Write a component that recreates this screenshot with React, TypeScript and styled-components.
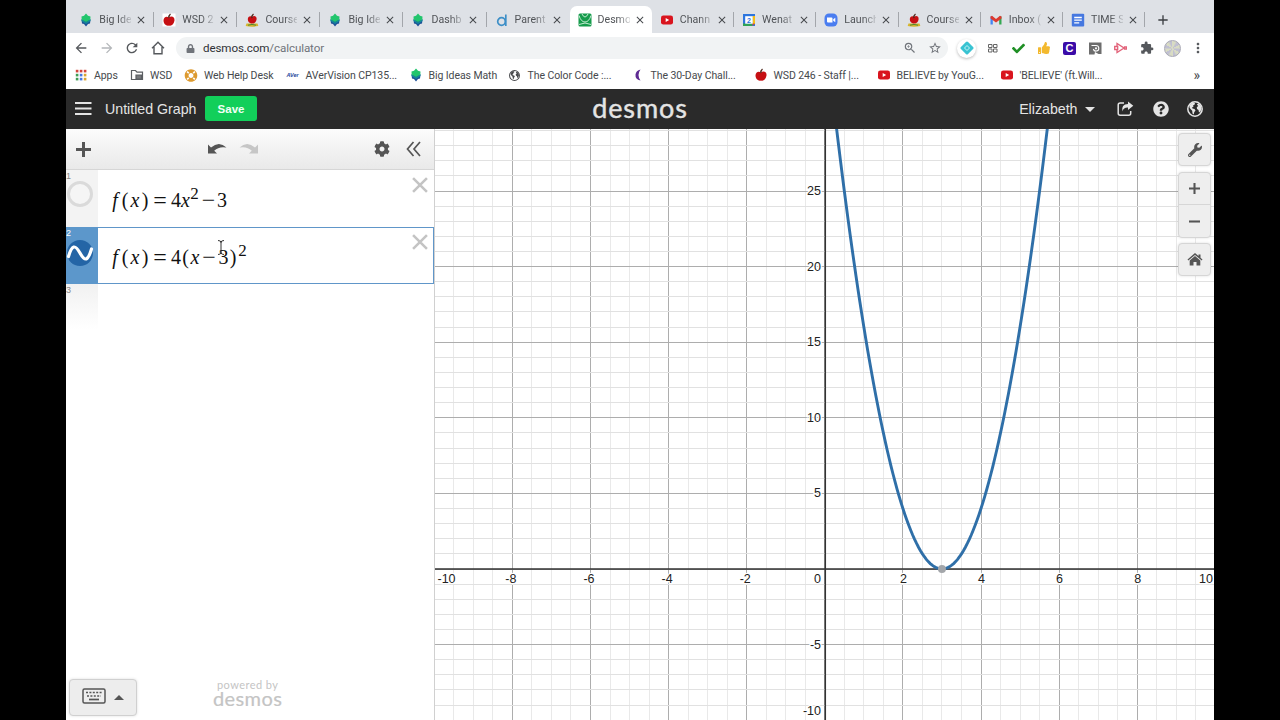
import React from "react";
import styled, { createGlobalStyle } from "styled-components";
import { FaWrench, FaQuestionCircle, FaCog, FaCheck, FaThumbsUp, FaLifeRing, FaLock } from "react-icons/fa";
import { MdArrowBack, MdArrowForward, MdRefresh, MdZoomIn, MdStarBorder, MdMoreVert, MdAdd, MdClose, MdExtension } from "react-icons/md";

const Global = createGlobalStyle`
  html, body { margin: 0; background: #000; }
  body { width: 1280px; height: 720px; overflow: hidden; font-family: "Liberation Sans", Arial, sans-serif; }
  * { box-sizing: border-box; }
  svg { display: block; flex: none; }
`;

const Screen = styled.main`
  width: 1148px;
  height: 720px;
  margin-left: 66px;
  display: flex;
  flex-direction: column;
  background: #fff;
  overflow: hidden;
`;

/* ---------- browser chrome ---------- */
const TabStrip = styled.div`
  height: 33px;
  padding: 6px 0 0 5.3px;
  display: flex;
  background: #dee1e6;
  font: 10.6px Roboto, sans-serif;
  color: #505357;
`;
const Tab = styled.div<{ $active?: boolean; $divided?: boolean; $w: number }>`
  position: relative;
  width: ${(p) => p.$w}px;
  height: 27px;
  flex: none;
  display: flex;
  align-items: center;
  padding-left: 7px;
  border-radius: 7px 7px 0 0;
  background: ${(p) => (p.$active ? "#fff" : "transparent")};
  &::after {
    content: "";
    position: absolute;
    right: 0;
    top: 6px;
    width: 1px;
    height: 15px;
    background: ${(p) => (p.$divided ? "#a3a6ab" : "transparent")};
  }
`;
const TabTitle = styled.span`
  width: 32px;
  margin-left: 5px;
  white-space: nowrap;
  mask-image: linear-gradient(90deg, #000 60%, #0003);
`;
const TabClose = styled(MdClose)`
  margin-left: 4px;
  color: #46494d;
`;
const NewTab = styled(MdAdd)`
  margin: 6px 0 0 10px;
  color: #3b3e42;
`;
const AddressRow = styled.div`
  height: 30px;
  display: flex;
  align-items: center;
  color: #55585c;
`;
const NavButtons = styled.div`
  width: 110px;
  padding-left: 7px;
  display: flex;
  gap: 9.700px;
`;
const Omnibox = styled.div`
  width: 772px;
  height: 22px;
  padding: 0 6px 0 10px;
  display: flex;
  align-items: center;
  border-radius: 11px;
  background: #f1f3f4;
  font: 11.6px Roboto, sans-serif;
  color: #70747a;
  b { font-weight: 400; color: #303236; }
`;
const Url = styled.span`
  flex: 1;
  margin-left: 8px;
  letter-spacing: -0.1px;
`;
const OmniIcons = styled.div`
  display: flex;
  gap: 11px;
`;
const Extensions = styled.div`
  display: flex;
  align-items: center;
  margin-left: 6px;
`;
const ExtensionSlot = styled.div`
  width: 25.7px;
  display: flex;
  justify-content: center;
`;
const TealBadge = styled.div`
  width: 19px;
  height: 19px;
  display: grid;
  place-items: center;
  border-radius: 50%;
  background: #fff;
  box-shadow: 0 1px 3px #0004;
`;
const LetterBadge = styled.div`
  width: 13px;
  height: 13px;
  border-radius: 2px;
  background: #3b0ca8;
  color: #fff;
  font: bold 11px/13px "Liberation Sans", sans-serif;
  text-align: center;
`;
const Avatar = styled.div`
  width: 17px;
  height: 17px;
  border-radius: 50%;
  border: 1px solid #a9a9b6;
  background: repeating-conic-gradient(#d9dcc4 0 20deg, #c0c0d2 40deg 60deg);
`;
const Bookmarks = styled.div`
  height: 26px;
  padding: 0 14px 2px 7px;
  display: flex;
  align-items: center;
  font: 10.5px Roboto, sans-serif;
  letter-spacing: -0.08px;
  color: #46494d;
`;
const Bookmark = styled.div<{ $w: number }>`
  width: ${(p) => p.$w}px;
  display: flex;
  align-items: center;
  gap: 5px;
  white-space: nowrap;
`;
const Overflow = styled.span`
  margin-left: auto;
  font-size: 14px;
`;
const AverMark = styled.span`
  width: 16px;
  text-align: center;
  font: italic bold 5.5px "Liberation Sans", sans-serif;
  color: #28479b;
`;

/* ---------- calculator header ---------- */
const AppHeader = styled.header`
  height: 40px;
  flex: none;
  display: grid;
  grid-template-columns: 1fr auto 1fr;
  align-items: center;
  padding-bottom: 1px;
  background: #2a2a2a;
  color: #e4e4e4;
`;
const HeaderLeft = styled.div`
  display: flex;
  align-items: center;
  padding-left: 9px;
`;
const GraphTitle = styled.span`
  width: 100px;
  margin-left: 13px;
  font-size: 14.2px;
  white-space: nowrap;
`;
const SaveButton = styled.button`
  width: 52px;
  height: 25px;
  padding: 0;
  border: 0;
  border-radius: 3px;
  background: #12cf5a;
  color: #f2fff6;
  font: bold 11.5px "Liberation Sans", sans-serif;
`;
const Wordmark = styled.span<{ $size: number; $ls: number; $weight: number }>`
  font: 400 ${(p) => p.$size}px/1 Lato, sans-serif;
  letter-spacing: ${(p) => p.$ls}px;
  -webkit-text-stroke: ${(p) => p.$weight}px currentColor;
`;
const HeaderWordmark = styled(Wordmark)`
  padding-bottom: 2px;
`;
const HeaderRight = styled.div`
  display: flex;
  justify-content: flex-end;
  align-items: center;
  padding-right: 11px;
`;
const UserName = styled.span`
  font-size: 14.2px;
`;
const Caret = styled.i<{ $up?: boolean; $color: string }>`
  border: 5px solid transparent;
  border-${(p) => (p.$up ? "bottom" : "top")}: 5px solid ${(p) => p.$color};
  border-${(p) => (p.$up ? "top" : "bottom")}: 0;
`;
const MenuCaret = styled(Caret)`
  margin: 2px 0 0 7px;
`;
const HeaderIcons = styled.div`
  display: flex;
  align-items: center;
  gap: 18.500px;
  margin-left: 22.500px;
`;

/* ---------- expression list ---------- */
const Workspace = styled.div`
  flex: 1;
  display: flex;
  min-height: 0;
`;
const ExpressionPanel = styled.section`
  width: 369px;
  display: flex;
  flex-direction: column;
  background: #fff;
  border-right: 1px solid #d0d0d0;
`;
const PanelToolbar = styled.div`
  height: 41px;
  flex: none;
  display: flex;
  align-items: center;
  padding: 0 13px 0 10px;
  background: linear-gradient(#fcfcfc, #e9e9e9);
  border-bottom: 1px solid #d6d6d6;
  color: #555;
`;
const UndoGroup = styled.div`
  display: flex;
  gap: 12px;
  margin: 0 auto 0 116px;
`;
const SettingsGroup = styled.div`
  display: flex;
  align-items: center;
  gap: 16px;
`;
const Row = styled.div<{ $active?: boolean }>`
  height: 57px;
  flex: none;
  display: flex;
  background: #fff;
  box-shadow: ${(p) => (p.$active ? "inset 0 0 0 1px #6096c9" : "none")};
`;
const Gutter = styled.div<{ $tone: "idle" | "active" | "next" }>`
  width: 32px;
  flex: none;
  display: flex;
  flex-direction: column;
  font-size: 9px;
  line-height: 11px;
  padding-top: 1px;
  color: ${(p) => (p.$tone === "active" ? "#fff" : "#888")};
  background: ${(p) =>
    p.$tone === "active" ? "#5c97cb" : p.$tone === "idle" ? "#f3f3f3" : "linear-gradient(#f1f1f1, #fff 80%)"};
`;
const HiddenCurve = styled.div`
  width: 26px;
  height: 26px;
  margin: -1px 0 0 1px;
  border: 3px solid #dadada;
  border-radius: 50%;
  background: #f5f5f5;
`;
const Formula = styled.div`
  flex: 1;
  display: flex;
  align-items: baseline;
  padding: 17px 0 0 11px;
  font: 20px/24px "Liberation Serif", serif;
  color: #111;
`;
const Glyph = styled.span<{ $w: number; $italic?: boolean; $sup?: boolean }>`
  width: ${(p) => p.$w}px;
  flex: none;
  position: relative;
  top: ${(p) => (p.$sup ? -8 : 0)}px;
  font-style: ${(p) => (p.$italic ? "italic" : "normal")};
  font-size: ${(p) => (p.$sup ? 17 : 20)}px;
  text-align: center;
`;
const Operator = styled(Glyph)`
  font-size: 24px;
  margin: 0 -1px;
  top: 1px;
  display: flex;
  justify-content: center;
`;
const RemoveIcon = styled.div`
  padding: 7px 6px 0 0;
`;
const TextCursor = styled.svg`
  position: absolute;
  left: -1px;
  top: -5px;
`;
const PanelFooter = styled.div`
  margin-top: auto;
  display: flex;
  align-items: center;
  padding: 0 0 4px 3px;
`;
const KeypadButton = styled.button`
  width: 68px;
  height: 37px;
  padding: 0 1px 4px 0;
  display: flex;
  justify-content: center;
  align-items: center;
  gap: 8px;
  border: 1px solid #d0d0d0;
  border-radius: 4px;
  background: #ededed;
  box-shadow: 0 0 3px #0002;
`;
const KeypadCaret = styled(Caret)`
  margin-top: 4px;
`;
const PoweredBy = styled.div`
  margin: -9px 0 0 76px;
  display: flex;
  flex-direction: column;
  align-items: center;
  color: #c4c4c4;
  font: 11px/13px Lato, sans-serif;
  letter-spacing: 0.45px;
`;
const FooterWordmark = styled(Wordmark)`
  margin-top: -3px;
`;

/* ---------- graph ---------- */
const GraphPane = styled.section`
  position: relative;
  width: 779px;
  height: 591px;
`;
const GraphControls = styled.div`
  position: absolute;
  top: 4px;
  right: 3px;
  display: flex;
  flex-direction: column;
  gap: 5.500px;
`;
const ControlGroup = styled.div`
  width: 33px;
  border: 1px solid #d6d6d6;
  border-radius: 4px;
  background: #eee;
  box-shadow: 0 0 3px #0002;
  color: #555;
`;
const Control = styled.div`
  height: 31px;
  display: grid;
  place-items: center;
  & + & { height: 33px; padding-top: 1px; border-top: 1px solid #d6d6d6; }
`;

const BigIdeas = () => (
  <svg width="16" height="16" viewBox="0 0 16 16">
    <path d="M8 8 12.500 7.500 12 11.500 10 12 8 14.500 6 12 4 11.500 3.500 7.500Z" fill="#1c4f96" />
    <path d="M3.500 7 8 10.500 12.500 7V9L8 12 3.500 9Z" fill="#158a9c" />
    <path d="M8 1.500 10 3.800 12.500 4.500 12.300 7.500 8 10 3.700 7.500 3.500 4.500 6 3.800Z" fill="#22c56d" />
  </svg>
);
const Apple = ({ box, base }: { box?: boolean; base?: boolean }) => (
  <svg width="16" height="16" viewBox="0 0 16 16">
    {box && <rect x="1.500" y="1.500" width="13" height="13" fill="#fff" />}
    {base && <path d="M2.500 11.500h11l.8 2.500q-6.300 1.300-12.600 0Z" fill="#d6b52b" />}
    {base && <path d="M4 13.200q4-1.500 8 0" stroke="#4c8a35" fill="none" />}
    <path
      transform={base ? "translate(1.800 .5) scale(.8)" : undefined}
      d="M8 5.500C10 3.500 14 4.500 13.500 8.500 13 12 10.500 14.500 8 13.500 5.500 14.500 2.500 12 2.500 8.500 2.500 4.500 6 3.800 8 5.500Z"
      fill="#c60f13"
    />
    <path d="M8 6Q7.500 3.500 9.500 2" stroke="#4d2418" strokeWidth="1.300" fill="none" />
  </svg>
);
const YouTube = () => (
  <svg width="16" height="16" viewBox="0 0 16 16">
    <rect x="2" y="3.500" width="12" height="9" rx="2.300" fill="#d9141e" />
    <path d="M6.700 6v4l3.500-2Z" fill="#fff" />
  </svg>
);
const ParentD = () => (
  <svg width="16" height="16" viewBox="0 0 16 16" fill="none" stroke="#3d8fc7" strokeWidth="1.700">
    <circle cx="7.500" cy="9.500" r="3.800" />
    <path d="M11.800 2.500V14" />
  </svg>
);
const DesmosTab = () => (
  <svg width="16" height="16" viewBox="0 0 16 16">
    <rect x="1.500" y="1.500" width="13" height="13" rx="1.500" fill="#169c4c" />
    <path d="M2 3.500Q4 10 8 10T14 3.500M2 12.500q6-3 12 0M5 2q3 6 6 0" fill="none" stroke="#c5ebd2" strokeWidth="1" />
  </svg>
);
const CalendarIcon = () => (
  <svg width="16" height="16" viewBox="0 0 16 16">
    <path d="M2 2h12v12H2Z" fill="#2d75de" />
    <path d="M11.500 4H14v8h-2.500Z" fill="#f5bd19" />
    <path d="M2 11.500h9.500V14H2Z" fill="#2fa356" />
    <path d="M11.500 11.500H14L11.500 14Z" fill="#dc4437" />
    <path d="M4.200 4.200h7.500v7.500H4.200Z" fill="#fff" />
    <text x="8" y="10.600" fontSize="7" textAnchor="middle" fontFamily="Liberation Sans" fontWeight="700" fill="#2d75de">2</text>
  </svg>
);
const ZoomIcon = () => (
  <svg width="16" height="16" viewBox="0 0 16 16">
    <rect x="1.500" y="1.500" width="13" height="13" rx="4.500" fill="#4a7df0" />
    <path d="M4 5.500h4.500q1 0 1 1v4H5q-1 0-1-1ZM10.200 7.200 12.300 5.700v4.600L10.200 8.800Z" fill="#fff" />
  </svg>
);
const Gmail = () => (
  <svg width="16" height="16" viewBox="0 0 16 16">
    <path d="M2.500 12.500V4.500h2.300v8Z" fill="#4285f4" />
    <path d="M11.200 12.500v-8h2.300v8Z" fill="#34a853" />
    <path d="M2.500 4.500 4 3.700 8 7l4-3.300 1.500.8v2L8 10.500 2.500 6.500Z" fill="#dc3a30" />
  </svg>
);
const Docs = () => (
  <svg width="16" height="16" viewBox="0 0 16 16">
    <rect x="1.800" y="1.800" width="12.400" height="12.600" rx="1" fill="#4678e0" />
    <path d="M4.200 5.500h7.600M4.200 8.200h7.600M4.200 10.900h5" stroke="#fff" strokeWidth="1.300" />
  </svg>
);
const AppsGrid = () => {
  const tones = ["#d2453b", "#d2453b", "#d2453b", "#3f9d55", "#4678e0", "#d9a630", "#3f9d55", "#4678e0", "#d9a630"];
  return (
    <svg width="16" height="16" viewBox="0 0 16 16">
      {tones.map((c, i) => (
        <rect key={i} x={2.8 + (i % 3) * 4} y={2.8 + Math.floor(i / 3) * 4} width="2.600" height="2.600" fill={c} />
      ))}
    </svg>
  );
};
const Folder = () => (
  <svg width="16" height="16" viewBox="0 0 16 16" fill="none" stroke="#5b5e62" strokeWidth="1.200">
    <path d="M2.500 12.500V3.500h4l1.500 1.700h5.500v7.300Z" />
    <path d="M7 12V8h5.500v4Z" fill="#77797c" />
  </svg>
);
const House = () => (
  <svg width="16" height="16" viewBox="0 0 16 16" fill="none" stroke="#55585c" strokeWidth="1.400">
    <path d="M2 8.300 8 2.300l6 6M4 7v6.700h8V7" />
  </svg>
);
const ThumbUp = styled(FaThumbsUp)`
  color: #f3b92e;
`;
const Globe = ({ size, color }: { size: number; color: string }) => (
  <svg width={size} height={size} viewBox="0 0 16 16">
    <circle cx="8" cy="8" r="7.200" fill="none" stroke={color} strokeWidth="1.500" />
    <path
      d="M2.500 4 5.500 1.500 8 2 7.500 3.800 6 4.500 6.500 5.800 5 6.500 5.500 7.500 7.500 8 8.500 9.500 7.200 11.200 6.800 13.500 5.500 12.500 5.200 9.800 3.500 8 2.500 6.500ZM9.800 3.200 11.500 2.500 13.800 4.500 14.500 7.500 13.500 10.500 12 11.500 11.500 9 10 8 9.800 6.200 11.200 5Z"
      fill={color}
    />
  </svg>
);
const WebGlobe = styled.div`
  width: 16px;
  display: grid;
  place-items: center;
`;
const Crescent = () => (
  <svg width="16" height="16" viewBox="0 0 16 16">
    <path d="M10.500 2.500Q6.500 8 10.500 13.500 5 12.500 5.500 7.500 6 3.500 10.500 2.500Z" fill="#5e2b93" />
  </svg>
);
const UndoArrow = ({ flip, color }: { flip?: boolean; color: string }) => (
  <svg width="20" height="14" viewBox="0 0 20 14">
    <g transform={flip ? "translate(20 0) scale(-1 1)" : undefined} fill={color}>
      <path d="M1 2.500V11.500H10L7.200 8.800Q12 4 19.500 5.500 12-1.500 4 5.500Z" />
    </g>
  </svg>
);
const HomeSolid = () => (
  <svg width="16" height="14" viewBox="0 0 16 14" fill="#555">
    <path d="M8 0 11.500 3V1.500h2V4.700L15.500 6.500l-.8 1L8 1.900 1.300 7.500l-.8-1Z" />
    <path d="M8 3 13.300 7.500V12.500H9.500V9h-3v3.500H2.700v-5Z" />
  </svg>
);
const ShareIcon = () => (
  <svg width="17" height="16" viewBox="0 0 17 16">
    <path d="M7 2H3.200Q1.200 2 1.200 4v8.200q0 2 2 2h8.500q2 0 2-2V10" fill="none" stroke="#e4e4e4" strokeWidth="1.500" />
    <path d="M11 .5 16.300 4.800 11 9V6.600Q6.500 6.400 5.300 10.500 4 3.300 11 2.900Z" fill="#e4e4e4" />
  </svg>
);
const Cross = () => (
  <svg width="16" height="16" viewBox="0 0 15 15" stroke="#c4c4c4" strokeWidth="2.400">
    <path d="M1 1 14 14M14 1 1 14" />
  </svg>
);
const Plus = ({ size, weight, minus }: { size: number; weight: number; minus?: boolean }) => (
  <svg width={size} height={size} viewBox="0 0 16 16" stroke="#555" strokeWidth={weight}>
    <path d={minus ? "M0 8H16" : "M0 8H16M8 0V16"} />
  </svg>
);

const tabs: { title: string; icon: React.ReactNode; active?: boolean; divided?: boolean }[] = [
  { title: "Big Ide", icon: <BigIdeas />, divided: true },
  { title: "WSD 2", icon: <Apple box />, divided: true },
  { title: "Course", icon: <Apple base />, divided: true },
  { title: "Big Ide", icon: <BigIdeas />, divided: true },
  { title: "Dashb", icon: <BigIdeas />, divided: true },
  { title: "Parent", icon: <ParentD /> },
  { title: "Desmo", icon: <DesmosTab />, active: true },
  { title: "Chann", icon: <YouTube />, divided: true },
  { title: "Wenat", icon: <CalendarIcon />, divided: true },
  { title: "Launch", icon: <ZoomIcon />, divided: true },
  { title: "Course", icon: <Apple base />, divided: true },
  { title: "Inbox (", icon: <Gmail />, divided: true },
  { title: "TIME S", icon: <Docs />, divided: true },
];

const bookmarks: { label: string; icon: React.ReactNode; w: number }[] = [
  { label: "Apps", icon: <AppsGrid />, w: 56 },
  { label: "WSD", icon: <Folder />, w: 54 },
  { label: "Web Help Desk", icon: <FaLifeRing size={13} color="#dd9a2f" style={{ width: 16 }} />, w: 101.5 },
  { label: "AVerVision CP135...", icon: <AverMark>AVer</AverMark>, w: 123 },
  { label: "Big Ideas Math", icon: <BigIdeas />, w: 99 },
  { label: "The Color Code :...", icon: <WebGlobe><Globe size={11} color="#48494c" /></WebGlobe>, w: 123 },
  { label: "The 30-Day Chall...", icon: <Crescent />, w: 123 },
  { label: "WSD 246 - Staff |...", icon: <Apple />, w: 123 },
  { label: "BELIEVE by YouG...", icon: <YouTube />, w: 123 },
  { label: "'BELIEVE' (ft.Will...", icon: <YouTube />, w: 110 },
];

/* Graph scale: pixels per unit on each axis and the position of the origin. */
const OX = 389.8;
const OY = 440;
const SX = 39.05;
const SY = 15.12;
const px = (x: number) => OX + x * SX;
const py = (y: number) => OY - y * SY;
const range = (a: number, b: number, step: number) =>
  Array.from({ length: Math.round((b - a) / step) + 1 }, (_, i) => a + i * step);
const snap = (v: number) => Math.round(v - 0.5) + 0.5;

const curve = range(0, 6, 0.05)
  .map((x, i) => `${i ? "L" : "M"}${px(x).toFixed(2)} ${py(4 * (x - 3) ** 2).toFixed(2)}`)
  .join("");

const Plot = () => (
  <svg width="779" height="591" viewBox="0 0 779 591">
    <rect width="779" height="591" fill="#fff" />
    {range(-10, 10, 0.5).map((x) => (
      <path key={x} d={`M${snap(px(x))} 0V591`} stroke={x % 2 === 0 ? "#adadad" : "#e9e9e9"} />
    ))}
    {range(-10, 30, 1).map((y) => (
      <path key={y} d={`M0 ${snap(py(y))}H779`} stroke={y % 5 === 0 ? "#adadad" : "#e1e1e1"} />
    ))}
    <path d={`M${OX + 0.5} 0V591M0 ${OY}H779`} stroke="#333" strokeWidth="1.500" />
    <path d={curve} fill="none" stroke="#2f6fa8" strokeWidth="2.900" />
    <circle cx={px(3)} cy={OY} r="4" fill="#a3a6aa" />
    <g
      fontFamily="Liberation Sans, Arial, sans-serif"
      fontSize="12.500"
      fill="#222"
      stroke="#fff"
      strokeWidth="2.500"
      paintOrder="stroke"
    >
      {[-8, -6, -4, -2, 2, 4, 6, 8].map((x) => (
        <text key={x} x={px(x) - (x < 0 ? 1.5 : -0.5)} y="454" textAnchor="middle">{x}</text>
      ))}
      <text x="2.500" y="454">-10</text>
      <text x="778" y="454" textAnchor="end">10</text>
      <text x="386" y="454" textAnchor="end">0</text>
      {[25, 20, 15, 10, 5, -5].map((y) => (
        <text key={y} x="386" y={py(y) + 4} textAnchor="end">{y}</text>
      ))}
      <text x="386" y="586" textAnchor="end">-10</text>
    </g>
  </svg>
);

const FunctionHead = () => (
  <>
    <Glyph $w={12} $italic>f</Glyph>
    <Glyph $w={8}>(</Glyph>
    <Glyph $w={12} $italic>x</Glyph>
    <Glyph $w={8}>)</Glyph>
    <Operator $w={24}>=</Operator>
  </>
);

export default function App() {
  return (
    <>
      <Global />
      <Screen>
        <TabStrip>
          {tabs.map((t, i) => (
            <Tab key={i} $active={t.active} $divided={t.divided} $w={i < 6 ? 83.05 : 82.25}>
              {t.icon}
              <TabTitle>{t.title}</TabTitle>
              <TabClose size={12} />
            </Tab>
          ))}
          <NewTab size={16} />
        </TabStrip>
        <AddressRow>
          <NavButtons>
            <MdArrowBack size={16} />
            <MdArrowForward size={16} color="#b4b7ba" />
            <MdRefresh size={16} />
            <House />
          </NavButtons>
          <Omnibox>
            <FaLock size={9} />
            <Url><b>desmos.com</b>/calculator</Url>
            <OmniIcons>
              <MdZoomIn size={14} />
              <MdStarBorder size={14} />
            </OmniIcons>
          </Omnibox>
          <Extensions>
            <ExtensionSlot>
              <TealBadge>
                <svg width="14" height="14" viewBox="0 0 14 14">
                  <path d="M7 2 12 7 7 12 2 7Z" fill="#39c3d2" stroke="#39c3d2" strokeWidth="3" strokeLinejoin="round" />
                  <path d="M7 4.500 9.500 7 7 9.500 4.500 7Z" fill="none" stroke="#c9f5f7" />
                </svg>
              </TealBadge>
            </ExtensionSlot>
            <ExtensionSlot>
              <svg width="10" height="10" viewBox="0 0 10 10" fill="none" stroke="#666">
                <path d="M.5 1.500h3.500v3H.5ZM5.500 1.500H9v3H5.500ZM.5 6h3.500v3H.5ZM5.500 6H9v3H5.500Z" />
              </svg>
            </ExtensionSlot>
            <ExtensionSlot><FaCheck size={13} color="#1f8f25" /></ExtensionSlot>
            <ExtensionSlot><ThumbUp size={12} /></ExtensionSlot>
            <ExtensionSlot><LetterBadge>C</LetterBadge></ExtensionSlot>
            <ExtensionSlot>
              <svg width="13" height="13" viewBox="0 0 13 13">
                <path d="M0 .5H12.500V12H9.500L6 10 5.500 12.500H0Z" fill="#6d6d6d" />
                <path d="M2.500 3.500h4.500a2.800 2.800 0 1 1-2.700 3.500" fill="none" stroke="#fff" strokeWidth="1.100" />
                <circle cx="7" cy="6.300" r="1.100" fill="#fff" />
              </svg>
            </ExtensionSlot>
            <ExtensionSlot>
              <svg width="13" height="12" viewBox="0 0 13 12" fill="none" stroke="#e2637a" strokeWidth="1.300">
                <path d="M3 4V1.500L10 6 3 10.500V8" />
                <path d="M.7 4.500h3v3h-3ZM10.500 5h2v2h-2Z" />
              </svg>
            </ExtensionSlot>
            <ExtensionSlot><MdExtension size={14} /></ExtensionSlot>
            <ExtensionSlot><Avatar /></ExtensionSlot>
            <ExtensionSlot><MdMoreVert size={16} /></ExtensionSlot>
          </Extensions>
        </AddressRow>
        <Bookmarks>
          {bookmarks.map((b) => (
            <Bookmark key={b.label} $w={b.w}>
              {b.icon}
              {b.label}
            </Bookmark>
          ))}
          <Overflow>»</Overflow>
        </Bookmarks>

        <AppHeader>
          <HeaderLeft>
            <svg width="17" height="15" viewBox="0 0 17 15" stroke="#e4e4e4" strokeWidth="2">
              <path d="M0 2H16.500M0 7.500H16.500M0 13H16.500" />
            </svg>
            <GraphTitle>Untitled Graph</GraphTitle>
            <SaveButton>Save</SaveButton>
          </HeaderLeft>
          <HeaderWordmark $size={27} $ls={0.9} $weight={0.4}>desmos</HeaderWordmark>
          <HeaderRight>
            <UserName>Elizabeth</UserName>
            <MenuCaret $color="#e4e4e4" />
            <HeaderIcons>
              <ShareIcon />
              <FaQuestionCircle size={16} />
              <Globe size={16} color="#e4e4e4" />
            </HeaderIcons>
          </HeaderRight>
        </AppHeader>

        <Workspace>
          <ExpressionPanel>
            <PanelToolbar>
              <Plus size={15} weight={3.2} />
              <UndoGroup>
                <UndoArrow color="#555" />
                <UndoArrow flip color="#c6c6c6" />
              </UndoGroup>
              <SettingsGroup>
                <FaCog size={16} />
                <svg width="15" height="16" viewBox="0 0 15 16" fill="none" stroke="#555" strokeWidth="1.700">
                  <path d="M7.500 1 1.500 8l6 7M14 1 8 8l6 7" />
                </svg>
              </SettingsGroup>
            </PanelToolbar>
            <Row>
              <Gutter $tone="idle">
                1
                <HiddenCurve />
              </Gutter>
              <Formula>
                <FunctionHead />
                <Glyph $w={10}>4</Glyph>
                <Glyph $w={8} $italic>x</Glyph>
                <Glyph $w={11} $sup>2</Glyph>
                <Operator $w={19}>−</Operator>
                <Glyph $w={10}>3</Glyph>
              </Formula>
              <RemoveIcon><Cross /></RemoveIcon>
            </Row>
            <Row $active>
              <Gutter $tone="active">
                2
                <svg width="28" height="28" viewBox="0 0 28 28">
                  <circle cx="14" cy="14" r="13" fill="#2465a6" />
                  <path d="M2.500 17.500C6 6 9 5 14 14S22 22 25.500 10" fill="none" stroke="#fff" strokeWidth="3.200" strokeLinecap="round" />
                </svg>
              </Gutter>
              <Formula>
                <FunctionHead />
                <Glyph $w={10}>4</Glyph>
                <Glyph $w={9}>(</Glyph>
                <Glyph $w={10} $italic>x</Glyph>
                <Operator $w={20}>−</Operator>
                <Glyph $w={11}>
                  3
                  <TextCursor width="8" height="16" viewBox="0 0 8 16" fill="none" stroke="#333">
                    <path d="M1 .5Q4 .5 4 2.500 4 .5 7 .5M4 2V13M1 14.500Q4 14.500 4 12.500 4 14.500 7 14.500" />
                  </TextCursor>
                </Glyph>
                <Glyph $w={8}>)</Glyph>
                <Glyph $w={11} $sup>2</Glyph>
              </Formula>
              <RemoveIcon><Cross /></RemoveIcon>
            </Row>
            <Row>
              <Gutter $tone="next">3</Gutter>
            </Row>
            <PanelFooter>
              <KeypadButton>
                <svg width="24" height="16" viewBox="0 0 24 16" fill="none" stroke="#555">
                  <rect x="1" y="1" width="22" height="14" rx="1.500" strokeWidth="1.500" />
                  <path d="M4 4.500H20M5 8H19" strokeWidth="1.700" strokeDasharray="2 1.400" />
                  <path d="M7 11.500H17" strokeWidth="1.700" />
                </svg>
                <KeypadCaret $up $color="#555" />
              </KeypadButton>
              <PoweredBy>
                powered by
                <FooterWordmark $size={20} $ls={0.4} $weight={0.2}>desmos</FooterWordmark>
              </PoweredBy>
            </PanelFooter>
          </ExpressionPanel>
          <GraphPane>
            <Plot />
            <GraphControls>
              <ControlGroup><Control><FaWrench size={14} /></Control></ControlGroup>
              <ControlGroup>
                <Control><Plus size={11} weight={3} /></Control>
                <Control><Plus size={11} weight={3} minus /></Control>
              </ControlGroup>
              <ControlGroup><Control><HomeSolid /></Control></ControlGroup>
            </GraphControls>
          </GraphPane>
        </Workspace>
      </Screen>
    </>
  );
}
